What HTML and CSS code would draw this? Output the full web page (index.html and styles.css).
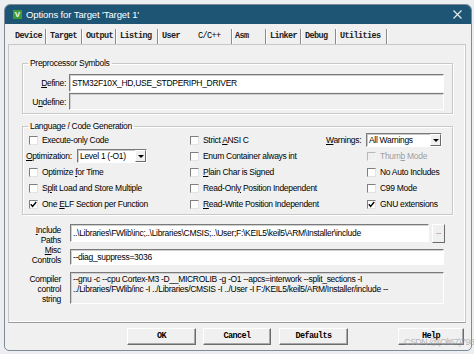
FILE: index.html
```html
<!DOCTYPE html>
<html lang="en">
<head>
    <meta charset="UTF-8">
    <title>Options for Target 'Target 1'</title>
    <link rel="stylesheet" href="styles.css">
</head>
<body>
    <div class="window">
        <div class="titlebar">
            <span class="app-icon">V</span>
            <span class="title">Options for Target 'Target 1'</span>
            <svg class="close" width="9" height="9" viewBox="0 0 9 9">
                <path d="M0.5 0.5 L8.5 8.5 M8.5 0.5 L0.5 8.5" stroke="#e8eef2" stroke-width="1.1" fill="none"/>
            </svg>
        </div>

        <!-- tab strip -->
        <div class="tabs">
            <span class="tab tab-device">Device</span>
            <span class="tab tab-target">Target</span>
            <span class="tab tab-output">Output</span>
            <span class="tab tab-listing">Listing</span>
            <span class="tab tab-user">User</span>
            <span class="tab tab-cc active">C/C++</span>
            <span class="tab tab-asm">Asm</span>
            <span class="tab tab-linker">Linker</span>
            <span class="tab tab-debug">Debug</span>
            <span class="tab tab-utilities">Utilities</span>
        </div>

        <div class="page">
            <fieldset class="group group-symbols">
                <legend>Preprocessor Symbols</legend>
                <div class="field-row">
                    <label class="field-label"><u>D</u>efine:</label>
                    <div class="edit edit-define">STM32F10X_HD,USE_STDPERIPH_DRIVER</div>
                </div>
                <div class="field-row">
                    <label class="field-label">U<u>n</u>define:</label>
                    <div class="edit edit-undefine disabled"></div>
                </div>
            </fieldset>

            <fieldset class="group group-lang">
                <legend>Language / Code Generation</legend>
                <div class="options">
                    <div class="check col1"><span class="box"></span><span>Execute-only Code</span></div>
                    <div class="check col2"><span class="box"></span><span>Strict <u>A</u>NSI C</span></div>
                    <div class="combo-row col3">
                        <span class="combo-label"><u>W</u>arnings:</span>
                        <div class="combo combo-warn"><span>All Warnings</span><span class="drop"></span></div>
                    </div>

                    <div class="combo-row col1">
                        <span class="combo-label opt-label"><u>O</u>ptimization:</span>
                        <div class="combo combo-opt"><span>Level 1 (-O1)</span><span class="drop"></span></div>
                    </div>
                    <div class="check col2"><span class="box"></span><span>Enum Container always int</span></div>
                    <div class="check col3 disabled-text"><span class="box disabled"></span><span>Thum<u>b</u> Mode</span></div>

                    <div class="check col1"><span class="box"></span><span>Optimize <u>f</u>or Time</span></div>
                    <div class="check col2"><span class="box"></span><span><u>P</u>lain Char is Signed</span></div>
                    <div class="check col3"><span class="box"></span><span>No Auto Includes</span></div>

                    <div class="check col1"><span class="box"></span><span>S<u>p</u>lit Load and Store Multiple</span></div>
                    <div class="check col2"><span class="box"></span><span>Read-Onl<u>y</u> Position Independent</span></div>
                    <div class="check col3"><span class="box"></span><span>C99 Mode</span></div>

                    <div class="check col1">
                        <span class="box"><svg width="7" height="7" viewBox="0 0 7 7"><path d="M0.8 3.3 L2.6 5.4 L6.2 1" stroke="#000" stroke-width="1.4" fill="none"/></svg></span>
                        <span>One <u>E</u>LF Section per Function</span>
                    </div>
                    <div class="check col2"><span class="box"></span><span><u>R</u>ead-Write Position Independent</span></div>
                    <div class="check col3">
                        <span class="box"><svg width="7" height="7" viewBox="0 0 7 7"><path d="M0.8 3.3 L2.6 5.4 L6.2 1" stroke="#000" stroke-width="1.4" fill="none"/></svg></span>
                        <span>GNU extensions</span>
                    </div>
                </div>
            </fieldset>

            <div class="extra-row row-include">
                <label class="extra-label"><u>I</u>nclude<br>Paths</label>
                <div class="edit edit-include">..\Libraries\FWlib\inc;..\Libraries\CMSIS;..\User;F:\KEIL5\keil5\ARM\Installer\include</div>
                <span class="browse">...</span>
            </div>
            <div class="extra-row row-misc">
                <label class="extra-label"><u>M</u>isc<br>Controls</label>
                <div class="edit edit-misc">--diag_suppress=3036</div>
            </div>
            <div class="extra-row row-compiler">
                <label class="extra-label">Compiler<br>control<br>string</label>
                <div class="edit edit-compiler disabled">--gnu -c --cpu Cortex-M3 -D__MICROLIB -g -O1 --apcs=interwork --split_sections -I<br>../Libraries/FWlib/inc -I ../Libraries/CMSIS -I ../User -I F:/KEIL5/keil5/ARM/Installer/include --</div>
            </div>
        </div>

        <div class="buttons">
            <span class="btn btn-ok">OK</span>
            <span class="btn btn-cancel">Cancel</span>
            <span class="btn btn-defaults">Defaults</span>
            <span class="btn btn-help">Help</span>
        </div>
    </div>

    <div class="watermark">CSDN @(Olt67)798</div>
</body>
</html>
```

FILE: styles.css
```css
body {
    margin: 0;
    overflow: hidden;
    background-color: #eceef1;
    font-family: "Liberation Sans", Arial, sans-serif;
    font-size: 8.5px;
    letter-spacing: -0.3px;
    color: #000;
}
.window {
    box-sizing: border-box;
    width: 468px;
    height: 347px;
    margin: 4px 0 0 4px;
    background-color: #f0f0f0;
    border: 1px solid #7d8c97;
    border-radius: 6px 6px 5px 5px;
    overflow: hidden;
}
.titlebar {
    height: 19px;
    margin: -1px -1px 0 -1px;
    padding-top: 1px;
    background-color: #1f5574;
    display: flex;
    align-items: center;
    padding-left: 9px;
}
.app-icon {
    width: 9px;
    height: 9px;
    background-color: #3f9b3a;
    color: #fff;
    font-size: 8px;
    line-height: 9px;
    font-weight: bold;
    text-align: center;
    letter-spacing: 0;
}
.title {
    margin-left: 4px;
    color: #fff;
    font-size: 9.5px;
    letter-spacing: -0.1px;
}
.close {
    margin-left: auto;
    margin-right: 10px;
}

/* tab strip */
.tabs {
    display: flex;
    height: 16px;
    margin-top: 4px;
    padding-left: 6px;
    font-family: "Liberation Mono", monospace;
    font-weight: bold;
    font-size: 8.5px;
    letter-spacing: -0.6px;
    color: #222;
}
.tab {
    box-sizing: border-box;
    height: 15px;
    margin-top: 1px;
    padding-left: 4px;
    line-height: 14px;
    border-right: 1px solid #8a8a8a;
    box-shadow: 1px 0 0 #fff;
}
.tab-device { width: 35px; }
.tab-target { width: 36px; }
.tab-output { width: 34px; }
.tab-listing { width: 42px; }
.tab-user { width: 36px; border-right-color: transparent; box-shadow: none; }
.tab-cc { width: 38px; }
.tab-asm { width: 34px; padding-left: 3px; }
.tab-linker { width: 35px; }
.tab-debug { width: 35px; }
.tab-utilities { width: 51px; }
.tab.active {
    font-weight: normal;
    color: #000;
}

.page {
    box-sizing: border-box;
    width: 458px;
    height: 279px;
    margin-left: 3px;
    padding: 12px 0 0 13px;
    border: 1px solid #c8c8c8;
    border-bottom: 1px solid #9a9a9a;
    box-shadow: inset -1px -1px 0 #fff;
}

/* group boxes */
.group {
    box-sizing: border-box;
    width: 431px;
    margin: 0;
    padding: 0;
    border: 1px solid #c9c9c9;
    box-shadow: inset 1px 1px 0 #fff, 1px 1px 0 #fff;
}
.group legend {
    margin-left: 5px;
    padding: 0 2px;
    line-height: 12px;
}
.group-symbols {
    padding: 5px 0 3px 0;
}
.group-lang {
    margin-top: 6px;
    padding: 0 0 2px 0;
}
.field-row {
    display: flex;
    align-items: center;
}
.field-row + .field-row {
    margin-top: 1px;
}
.field-label {
    width: 43px;
    padding-right: 1px;
    margin-right: 2px;
    text-align: right;
}
.disabled-text {
    color: #a0a0a0;
}

/* edit boxes */
.edit {
    box-sizing: border-box;
    background-color: #fff;
    border-top: 1px solid #7a7a7a;
    border-left: 1px solid #7a7a7a;
    border-right: 1px solid #fff;
    border-bottom: 1px solid #fff;
    box-shadow: inset 1px 1px 0 #d0d0d0;
    padding-left: 2px;
    white-space: nowrap;
    overflow: hidden;
}
.edit.disabled {
    background-color: #f0f0f0;
}
.edit-define {
    width: 375px;
    height: 18px;
    line-height: 16px;
}
.edit-undefine {
    width: 375px;
    height: 17px;
}

/* language options */
.options {
    display: grid;
    grid-template-columns: 164px 136px 1fr;
    grid-auto-rows: 16px;
    margin-left: 3px;
}
.check {
    display: flex;
    align-items: center;
    white-space: nowrap;
}
.check.col1 { padding-left: 3px; }
.check.col3 { padding-left: 41px; }
.box {
    box-sizing: border-box;
    width: 9px;
    height: 9px;
    margin-right: 4px;
    background-color: #fff;
    border-top: 1px solid #7f7f7f;
    border-left: 1px solid #7f7f7f;
    border-right: 1px solid #e3e3e3;
    border-bottom: 1px solid #e3e3e3;
    display: flex;
    align-items: center;
    justify-content: center;
}
.box.disabled {
    background-color: #f0f0f0;
    border-color: #b8b8b8 #f4f4f4 #f4f4f4 #b8b8b8;
}
.combo-row {
    display: flex;
    align-items: center;
    white-space: nowrap;
}
.combo-label {
    width: 40px;
}
.opt-label {
    width: 51px;
}
.combo {
    box-sizing: border-box;
    height: 14px;
    background-color: #fff;
    border-top: 1px solid #7a7a7a;
    border-left: 1px solid #7a7a7a;
    border-right: 1px solid #fff;
    border-bottom: 1px solid #fff;
    box-shadow: inset 1px 1px 0 #c8c8c8;
    padding-left: 2px;
    display: flex;
    align-items: center;
}
.combo-warn {
    width: 76px;
}
.combo-opt {
    width: 70px;
}
.drop {
    box-sizing: border-box;
    margin-left: auto;
    width: 11px;
    height: 12px;
    background-color: #f0f0f0;
    border-top: 1px solid #fff;
    border-left: 1px solid #fff;
    border-right: 1px solid #6a6a6a;
    border-bottom: 1px solid #6a6a6a;
    display: flex;
    align-items: center;
    justify-content: center;
}
.drop::after {
    content: "";
    border-left: 3px solid transparent;
    border-right: 3px solid transparent;
    border-top: 3px solid #000;
}

/* include / misc / compiler rows */
.extra-row {
    display: flex;
    align-items: flex-start;
}
.extra-label {
    width: 39px;
    margin-right: 9px;
    text-align: right;
    line-height: 10px;
}
.row-include {
    margin-top: 9px;
}
.row-include .extra-label {
    padding-top: 1px;
}
.edit-include {
    width: 359px;
    height: 18px;
    line-height: 16px;
}
.browse {
    box-sizing: border-box;
    width: 13px;
    height: 19px;
    margin-left: 3px;
    border-top: 1px solid #fff;
    border-left: 1px solid #fff;
    border-right: 1px solid #6a6a6a;
    border-bottom: 1px solid #6a6a6a;
    text-align: center;
    font-size: 7px;
    line-height: 14px;
    color: #444;
}
.row-misc {
    margin-top: 4px;
}
.row-misc .extra-label {
    margin-top: -4px;
}
.edit-misc {
    width: 374px;
    height: 16px;
    line-height: 14px;
}
.row-compiler {
    margin-top: 7px;
}
.row-compiler .extra-label {
    padding-top: 2px;
}
.edit-compiler {
    width: 374px;
    height: 32px;
    padding-top: 1px;
    line-height: 10px;
}

/* dialog buttons */
.buttons {
    display: flex;
    margin-top: 5px;
    padding-left: 122px;
    font-family: "Liberation Mono", monospace;
    font-weight: bold;
    font-size: 8.5px;
    letter-spacing: -0.6px;
}
.btn {
    box-sizing: border-box;
    height: 17px;
    line-height: 15px;
    text-align: center;
    background-color: #f0f0f0;
    border-top: 1px solid #fff;
    border-left: 1px solid #fff;
    border-right: 1px solid #6d6d6d;
    border-bottom: 1px solid #6d6d6d;
    box-shadow: inset -1px -1px 0 #a8a8a8;
}
.btn-ok { width: 69px; }
.btn-cancel { width: 68px; margin-left: 7px; }
.btn-defaults { width: 69px; margin-left: 8px; }
.btn-help { width: 66px; margin-left: 50px; }

.watermark {
    position: absolute;
    left: 404px;
    top: 337px;
    font-size: 9px;
    letter-spacing: -0.6px;
    color: rgba(150, 156, 166, 0.7);
    white-space: nowrap;
}
```
